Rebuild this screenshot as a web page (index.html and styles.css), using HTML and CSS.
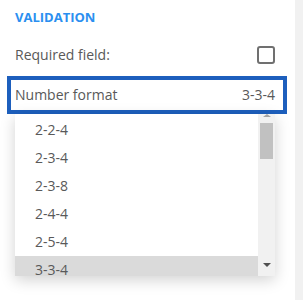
FILE: index.html
```html
<!DOCTYPE html>
<html lang="en">
<head>
    <meta charset="UTF-8">
    <title>Validation</title>
    <link rel="stylesheet" href="styles.css">
</head>
<body>
    <div class="page">
        <div class="panel">
            <h2 class="section-title">VALIDATION</h2>
            <div class="option-row">
                <span class="label">Required field:</span>
                <span class="checkbox"></span>
            </div>
            <div class="field">
                <div class="field-box">
                    <span class="label">Number format</span>
                    <span class="value">3-3-4</span>
                </div>
                <!-- open dropdown -->
                <div class="dropdown">
                    <ul class="options">
                        <li>2-2-4</li>
                        <li>2-3-4</li>
                        <li>2-3-8</li>
                        <li>2-4-4</li>
                        <li>2-5-4</li>
                        <li class="selected">3-3-4</li>
                    </ul>
                    <div class="scrollbar">
                        <span class="arrow-up"></span>
                        <span class="thumb"></span>
                        <span class="arrow-down"></span>
                    </div>
                </div>
            </div>
        </div>
        <div class="side-strip"></div>
    </div>
</body>
</html>
```

FILE: styles.css
```css
/* Reset */
body, h2, ul, li, div, span {
    margin: 0;
    padding: 0;
}

body {
    font-family: "Open Sans", "Liberation Sans", sans-serif;
    background-color: #ffffff;
    color: #595959;
}

.page {
    display: flex;
    height: 300px;
    overflow: hidden;
}

/* Panel */
.panel {
    width: 295px;
    padding-top: 8px;
}

.side-strip {
    width: 8px;
    background-color: #f1f1f1;
}

.section-title {
    padding-left: 15px;
    font-size: 13px;
    line-height: 18px;
    font-weight: bold;
    color: #2b8ff0;
}

.label {
    font-size: 14px;
    line-height: 20px;
}

/* Required field */
.option-row {
    display: flex;
    justify-content: space-between;
    align-items: center;
    height: 20px;
    margin-top: 19px;
    padding: 0 20px 0 15px;
}

.checkbox {
    width: 14px;
    height: 14px;
    border: 2px solid #707070;
    border-radius: 3px;
}

/* Number format field */
.field {
    position: relative;
    margin: 11px 8px 0 7px;
}

.field-box {
    display: flex;
    justify-content: space-between;
    align-items: flex-start;
    height: 25px;
    padding: 5px 8px 0 4px;
    border: 4px solid #1d5fbd;
}

.value {
    font-size: 14px;
    line-height: 20px;
}

/* Dropdown */
.dropdown {
    position: absolute;
    top: 100%;
    left: 8px;
    width: 260px;
    height: 162px;
    overflow: hidden;
    background-color: #ffffff;
    box-shadow: 0 4px 14px rgba(0, 0, 0, 0.18);
}

.options {
    list-style: none;
    margin-top: 2px;
}

.options li {
    height: 28px;
    padding-left: 20px;
    font-size: 14px;
    line-height: 28px;
}

.options li.selected {
    background-color: #dadada;
}

.scrollbar {
    position: absolute;
    top: 0;
    right: 0;
    bottom: 0;
    width: 17px;
    background-color: #f1f1f1;
}

.arrow-up {
    position: absolute;
    top: 0;
    left: 5px;
    border-left: 4px solid transparent;
    border-right: 4px solid transparent;
    border-bottom: 3px solid #a3a3a3;
}

.thumb {
    position: absolute;
    top: 9px;
    left: 2px;
    width: 13px;
    height: 36px;
    background-color: #c1c1c1;
}

.arrow-down {
    position: absolute;
    bottom: 9px;
    left: 5px;
    border-left: 4px solid transparent;
    border-right: 4px solid transparent;
    border-top: 4px solid #505050;
}
```
